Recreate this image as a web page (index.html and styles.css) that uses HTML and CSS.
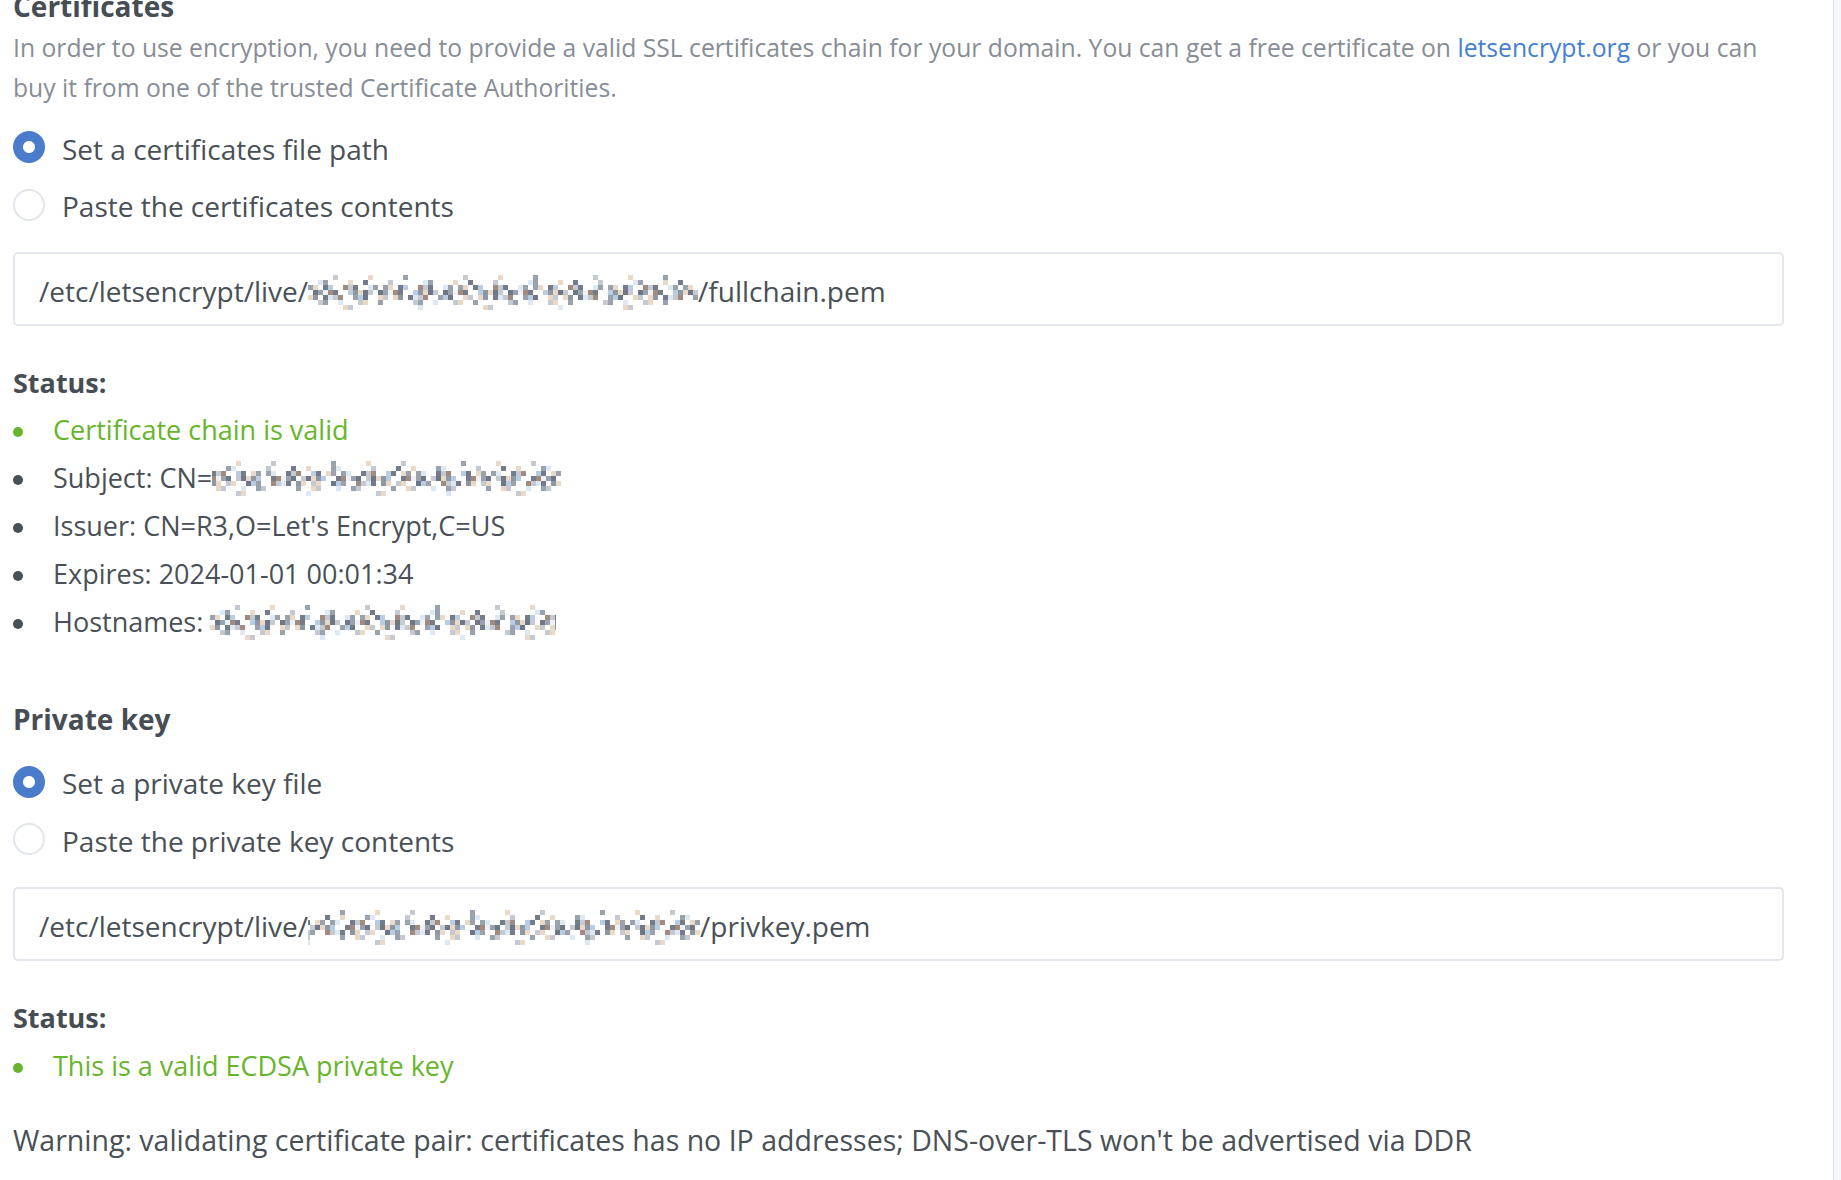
FILE: index.html
```html
<!DOCTYPE html>
<html lang="en">
<head>
<meta charset="utf-8">
<title>Encryption settings</title>
<link rel="stylesheet" href="styles.css">
</head>
<body>
<main class="card">
  <section class="group">
    <h2 class="group__title">Certificates</h2>
    <p class="group__desc">In order to use encryption, you need to provide a valid SSL certificates chain for your domain. You can get a free certificate on <a class="link" href="#">letsencrypt.org</a> or you can buy it from one of the trusted Certificate Authorities.</p>

    <div class="radios">
      <label class="radio">
        <span class="radio__dot radio__dot--on"></span>
        <span class="radio__label">Set a certificates file path</span>
      </label>
      <label class="radio">
        <span class="radio__dot"></span>
        <span class="radio__label">Paste the certificates contents</span>
      </label>
    </div>

    <div class="field">/etc/letsencrypt/live/<span class="mosaic mosaic--p1"></span>/fullchain.pem</div>

    <h3 class="status__title">Status:</h3>
    <ul class="status">
      <li class="status__item status__item--ok">Certificate chain is valid</li>
      <li class="status__item">Subject: CN=<span class="mosaic mosaic--subj mosaic--flip"></span></li>
      <li class="status__item">Issuer: CN=R3,O=Let's Encrypt,C=US</li>
      <li class="status__item">Expires: 2024-01-01 00:01:34</li>
      <li class="status__item">Hostnames: <span class="mosaic mosaic--host"></span></li>
    </ul>
  </section>

  <section class="group group--key">
    <h2 class="group__title">Private key</h2>
    <div class="radios radios--key">
      <label class="radio">
        <span class="radio__dot radio__dot--on"></span>
        <span class="radio__label">Set a private key file</span>
      </label>
      <label class="radio">
        <span class="radio__dot"></span>
        <span class="radio__label">Paste the private key contents</span>
      </label>
    </div>

    <div class="field field--key">/etc/letsencrypt/live/<span class="mosaic mosaic--p2 mosaic--flip"></span>/privkey.pem</div>

    <h3 class="status__title status__title--key">Status:</h3>
    <ul class="status status--key">
      <li class="status__item status__item--ok">This is a valid ECDSA private key</li>
    </ul>
  </section>

  <p class="warning">Warning: validating certificate pair: certificates has no IP addresses; DNS-over-TLS won't be advertised via DDR</p>
</main>
</body>
</html>
```

FILE: styles.css
```css
html {
  background: #f5f7fb;
  overflow: hidden;
}

body {
  margin: 0;
  font-family: "Open Sans", "Noto Sans", sans-serif;
  color: #495057;
  font-size: 28px;
}

.card {
  width: 1834px;
  box-sizing: border-box;
  min-height: 1220px;
  background: #fff;
  border-right: 1px solid #dfe4eb;
  padding: 0 49px 0 13px;
}

.group__title {
  margin: 0;
  font-size: 28px;
  line-height: 34px;
  font-weight: 700;
  color: #474d55;
}

.group:first-child .group__title {
  margin-top: -11px;
}

.group--key .group__title {
  margin-top: 55.5px;
}

.group__desc {
  margin: 5px 0 0;
  font-size: 24.7px;
  line-height: 40px;
  color: #878d96;
}

.link {
  color: #467fcf;
  text-decoration: none;
}

.radios {
  display: flex;
  flex-direction: column;
  gap: 17.5px;
  margin-top: 20.5px;
}

.radios--key {
  margin-top: 27.7px;
}

.radio {
  display: flex;
  align-items: center;
  gap: 17px;
  line-height: 40px;
  font-size: 28px;
  color: #495057;
}

.radio__dot {
  width: 32px;
  height: 32px;
  box-sizing: border-box;
  border-radius: 50%;
  border: 2px solid #e1e5ec;
  background: #fff;
  flex: none;
  margin-bottom: 3px;
}

.radio__dot--on {
  border: none;
  background: radial-gradient(circle, #fff 0 5.5px, #4a7ccb 6.5px);
}

.field {
  margin-top: 26px;
  border: 2px solid #e3e7ee;
  border-radius: 5px;
  padding: 4px 24px 0;
  height: 74px;
  box-sizing: border-box;
  line-height: 66px;
  font-size: 28px;
  color: #495057;
  white-space: nowrap;
}

.field--key {
  margin-top: 26.7px;
}

.status__title {
  margin: 39.5px 0 0;
  font-size: 27px;
  line-height: 34px;
  font-weight: 700;
  color: #474d55;
}

.status__title--key {
  margin-top: 40px;
}

.status {
  list-style: none;
  margin: 6.5px 0 0;
  padding: 0;
}

.status--key {
  margin-top: 7px;
}

.status__item {
  display: flex;
  align-items: center;
  line-height: 48px;
  font-size: 27px;
  white-space: pre;
}

.status__item::before {
  content: "";
  flex: none;
  width: 10px;
  height: 10px;
  border-radius: 50%;
  background: #495057;
  margin: 4px 30px 0 0;
}

.status__item--ok {
  color: #67b52b;
}

.status__item--ok::before {
  background: #67b52b;
}

.warning {
  margin: 30px 0 0;
  font-size: 28.5px;
  line-height: 40px;
  color: #495057;
}

/* pixelated (redacted) text */
.mosaic {
  display: inline-block;
  height: 35px;
  vertical-align: -8px;
  background:
    repeating-linear-gradient(90deg, transparent 0 25px, #c5cad2 25px 30px, transparent 30px 60px, #e9d9c6 60px 65px, transparent 65px 95px, #9aa2ae 95px 100px, transparent 100px 130px) 0 0 / 100% 5px no-repeat,
    repeating-linear-gradient(90deg, transparent 0 10px, #dde8f3 10px 15px, #9aa2ae 15px 20px, transparent 20px 40px, #e9d9c6 40px 45px, transparent 45px 55px, #747c8b 55px 60px, transparent 60px 80px, #c5cad2 80px 85px, transparent 85px 105px) 0 5px / 100% 5px no-repeat,
    repeating-linear-gradient(90deg, #9aa2ae 0 5px, #e9d9c6 5px 10px, transparent 10px 15px, #747c8b 15px 20px, #b8cce2 20px 25px, transparent 25px 35px, #a08b7e 35px 40px, #c5cad2 40px 45px, #747c8b 45px 50px, transparent 50px 60px, #dde8f3 60px 65px, #9aa2ae 65px 70px, transparent 70px 75px) 0 10px / 100% 5px no-repeat,
    repeating-linear-gradient(90deg, transparent 0 5px, #6f7787 5px 10px, #9aa2ae 10px 15px, #eef1f5 15px 20px, #a08b7e 20px 25px, #747c8b 25px 30px, transparent 30px 40px, #b8cce2 40px 45px, #8e97a4 45px 50px, #e9d9c6 50px 55px, #6f7787 55px 60px, #c5cad2 60px 65px) 0 15px / 100% 5px no-repeat,
    repeating-linear-gradient(90deg, #e9d9c6 0 5px, #8e97a4 5px 10px, transparent 10px 15px, #747c8b 15px 20px, #dde8f3 20px 25px, #c5cad2 25px 30px, #a08b7e 30px 35px, transparent 35px 45px, #9aa2ae 45px 50px, #b8cce2 50px 55px, #6f7787 55px 60px, transparent 60px 70px, #e9d9c6 70px 75px, #c5cad2 75px 80px, transparent 80px 85px) 0 20px / 100% 5px no-repeat,
    repeating-linear-gradient(90deg, transparent 0 10px, #c5cad2 10px 15px, #9aa2ae 15px 20px, transparent 20px 30px, #dde8f3 30px 35px, transparent 35px 50px, #c5cad2 50px 55px, #e9d9c6 55px 60px, transparent 60px 70px, #9aa2ae 70px 75px, transparent 75px 95px) 0 25px / 100% 5px no-repeat,
    repeating-linear-gradient(90deg, transparent 0 35px, #e9d9c6 35px 40px, #c5cad2 40px 45px, transparent 45px 110px, #dde8f3 110px 115px, transparent 115px 140px) 0 30px / 100% 5px no-repeat;
}

.mosaic--flip {
  transform: scaleX(-1);
}

.mosaic--p1 { width: 390px; }
.mosaic--p2 { width: 392px; }
.mosaic--subj { width: 349px; }
.mosaic--host { width: 346px; }
```
